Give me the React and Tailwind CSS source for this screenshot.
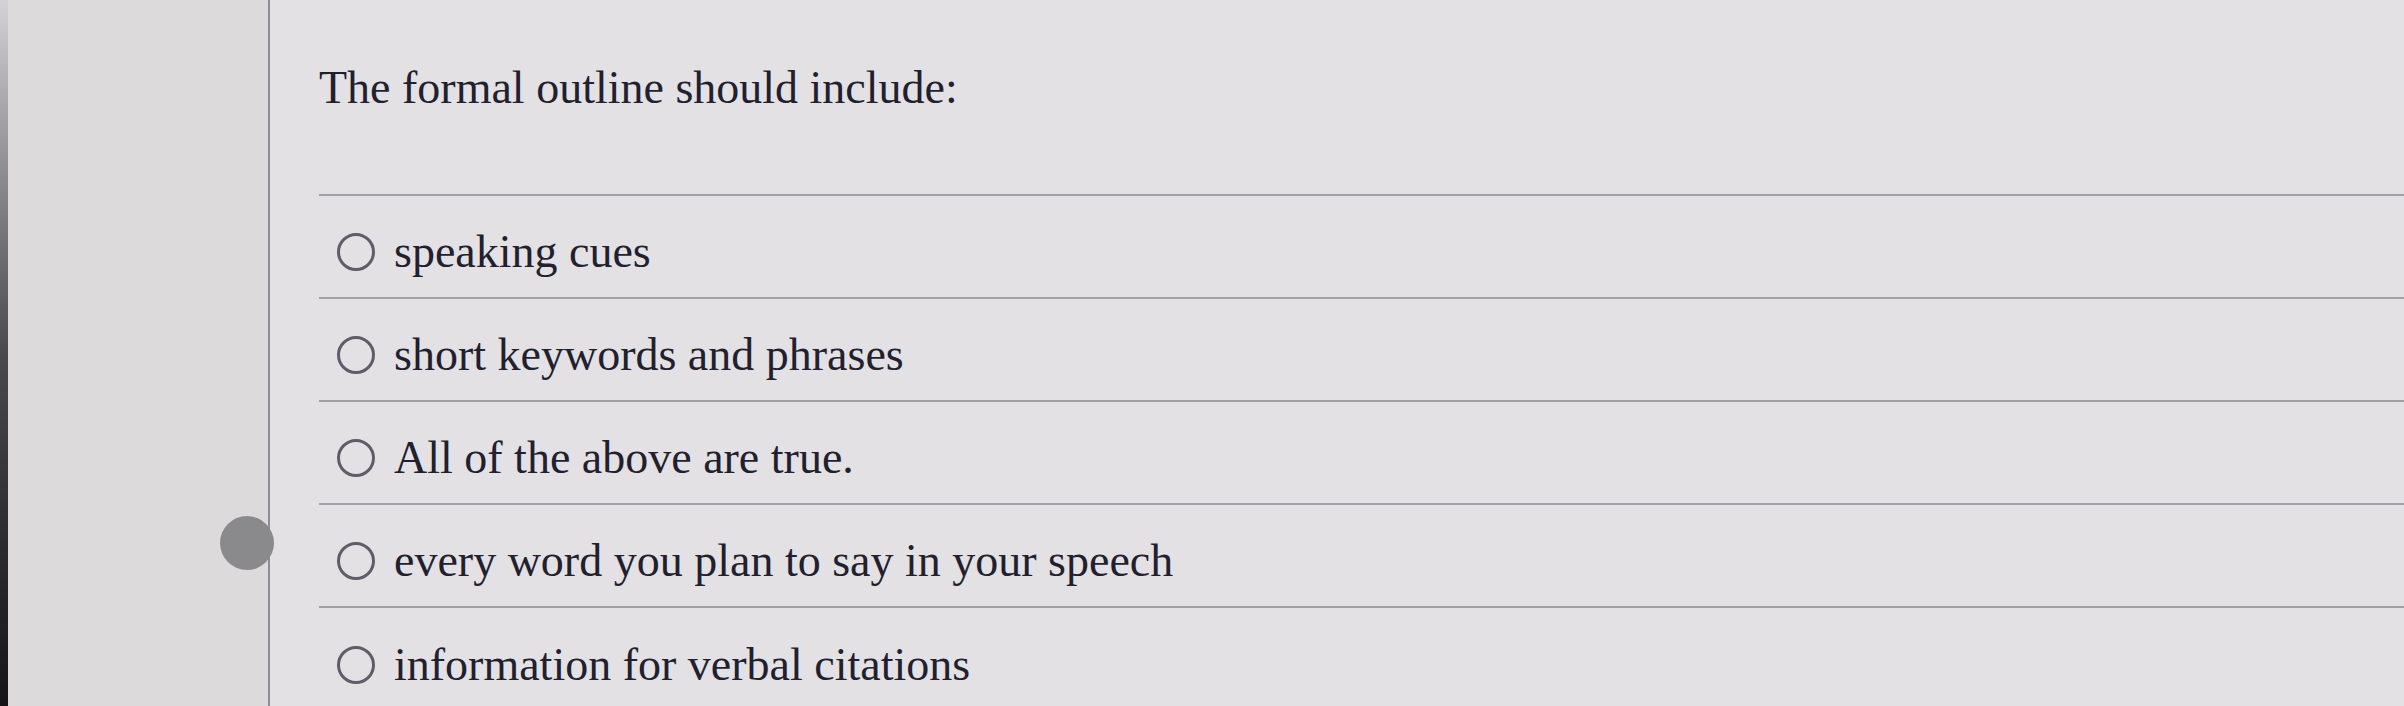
import React from 'react';

const options = [
  'speaking cues',
  'short keywords and phrases',
  'All of the above are true.',
  'every word you plan to say in your speech',
  'information for verbal citations'
];

const App = () => {
  return (
    <div
      className="relative flex h-[706px] w-full overflow-hidden bg-[#e3e1e3] text-[#221f2e]"
      style={{ fontFamily: '"Liberation Serif", "Times New Roman", serif' }}
    >
      {/* left dark edge of the screen */}
      <div className="w-[8px] shrink-0 bg-linear-to-b from-[#d4d2d4] via-[#4a4a4c] to-[#151517]" />

      {/* left panel */}
      <div className="relative w-[262px] shrink-0 border-r-2 border-[#8d8c96] bg-[#dcdadb]">
        {/* flag marker */}
        <div className="absolute left-[212px] top-[516px] h-[54px] w-[54px] rounded-full bg-[#8a898c]" />
      </div>

      {/* question area */}
      <div className="flex-1 pl-[49px]">
        <div className="h-[194px] pt-[58px] text-[46px] leading-[60px]">
          The formal outline should include:
        </div>
        <div className="border-t-2 border-[#a3a1a8]">
          {options.map((option, index) => (
            <div
              key={index}
              className="flex h-[103px] items-center gap-[19px] border-b-2 border-[#a3a1a8] pl-[18px] pt-[10px] last:border-b-0"
            >
              <span className="h-[38px] w-[38px] shrink-0 rounded-full border-[3px] border-[#5e5d69]" />
              <span className="text-[46px] leading-[52px]">{option}</span>
            </div>
          ))}
        </div>
      </div>
    </div>
  );
};

export default App;
